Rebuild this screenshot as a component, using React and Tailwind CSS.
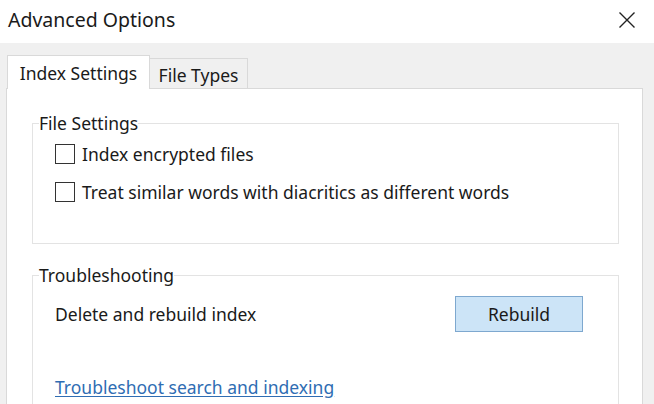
import React from "react";

const Checkbox = ({ label }) => (
  <label className="flex items-center h-[22px]">
    <span className="w-[20px] h-[20px] border border-[#333333] bg-white shrink-0" />
    <span className="ml-[7px]">{label}</span>
  </label>
);

export default function App() {
  return (
    <div
      className="w-[654px] h-[404px] overflow-hidden bg-[#f0f0f0] text-[17.5px] leading-[22px] text-[#1a1a1a]"
      style={{ fontFamily: '"Noto Sans", "Open Sans", sans-serif' }}
    >
      {/* Title bar */}
      <div className="h-[43px] bg-white flex items-center justify-between pl-[8px] pr-[18px] pb-[3px]">
        <span className="text-[19.5px] text-[#1a1a1a]">Advanced Options</span>
        <svg width="18" height="18" viewBox="0 0 18 18" className="text-[#222]">
          <path d="M1.5 1.5 L16.5 16.5 M16.5 1.5 L1.5 16.5" stroke="currentColor" strokeWidth="1.4" fill="none" />
        </svg>
      </div>

      {/* Tabs */}
      <div className="flex items-end pl-[7px] pt-[12px]">
        <div className="h-[34px] w-[143px] bg-white border border-[#d9d9d9] border-b-0 flex items-center justify-center relative z-10 -mb-px">
          Index Settings
        </div>
        <div className="h-[30px] w-[98px] bg-[#f0f0f0] border border-[#d9d9d9] border-l-0 border-b-0 flex items-center justify-center pt-[2px]">
          File Types
        </div>
      </div>

      {/* Panel */}
      <div className="ml-[6px] w-[637px] h-[400px] bg-white border border-[#d9d9d9] pt-[23px] pl-[25px] pr-[23px]">
        <fieldset className="border border-[#e3e3e3] px-[6px] pb-[40px]">
          <legend className="px-0">File Settings</legend>
          <div className="flex flex-col gap-[16px] pt-[9px] pl-[16px]">
            <Checkbox label="Index encrypted files" />
            <Checkbox label="Treat similar words with diacritics as different words" />
          </div>
        </fieldset>

        <fieldset className="mt-[20px] border border-[#e3e3e3] px-[6px] h-[200px]">
          <legend className="px-0">Troubleshooting</legend>
          <div className="flex items-center justify-between pt-[10px] pl-[16px] pr-[29px]">
            <span>Delete and rebuild index</span>
            <button className="w-[128px] h-[36px] bg-[#cce4f7] border border-[#7ea8cf] text-[#1a1a1a]">
              Rebuild
            </button>
          </div>
          <div className="pl-[16px] mt-[44px]">
            <a href="#" className="text-[#2f6db3] underline underline-offset-2">
              Troubleshoot search and indexing
            </a>
          </div>
        </fieldset>
      </div>
    </div>
  );
}
